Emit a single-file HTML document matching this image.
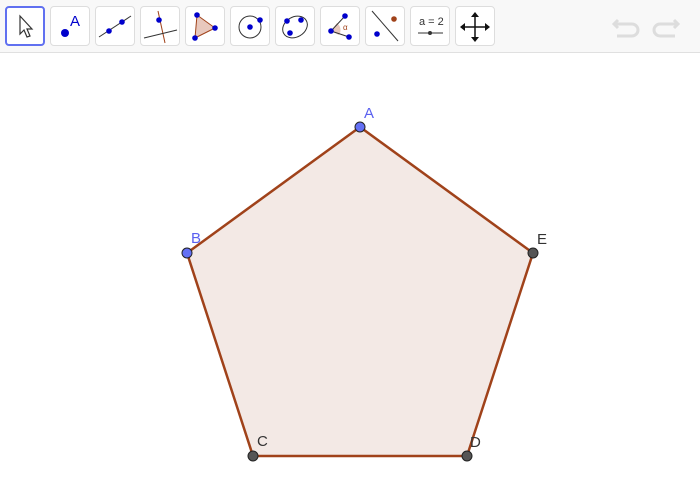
<!DOCTYPE html>
<html><head><style>
body{margin:0;width:700px;height:500px;overflow:hidden;background:#fff;font-family:"Liberation Sans",sans-serif}
#tb{position:absolute;left:0;top:0;width:700px;height:52px;background:#f8f8f8;border-bottom:1px solid #e0e0e0}
.b{position:absolute;top:6px;width:38px;height:38px;background:#fff;border:1px solid #ddd;border-radius:4px}
.b svg{position:absolute;left:0;top:0}
</style></head><body>
<div id="tb">
<div class="b" style="left:5px;border:2px solid #6070f0;width:36px;height:36px"><svg width="36" height="36"><path d="M13 8 L13 26 L17 22 L20 29 L23 28 L20 21 L25 21 Z" fill="#fff" stroke="#333" stroke-width="1.2"/></svg></div>
<div class="b" style="left:50px"><svg width="38" height="38"><circle cx="14" cy="26" r="4" fill="#00c"/><text x="19" y="19" font-size="15" fill="#00c" font-family="Liberation Sans">A</text></svg></div>
<div class="b" style="left:95px"><svg width="38" height="38"><line x1="3" y1="30" x2="35" y2="9" stroke="#333"/><circle cx="13" cy="24" r="2.8" fill="#00c"/><circle cx="26" cy="15" r="2.8" fill="#00c"/></svg></div>
<div class="b" style="left:140px"><svg width="38" height="38"><line x1="17" y1="4" x2="24" y2="36" stroke="#a0421a"/><line x1="3" y1="31" x2="36" y2="23" stroke="#333"/><circle cx="18" cy="13" r="2.8" fill="#00c"/></svg></div>
<div class="b" style="left:185px"><svg width="38" height="38"><polygon points="11,8 29,21 9,31" fill="#e8c8bd" stroke="#a0421a"/><circle cx="11" cy="8" r="2.8" fill="#00c"/><circle cx="29" cy="21" r="2.8" fill="#00c"/><circle cx="9" cy="31" r="2.8" fill="#00c"/></svg></div>
<div class="b" style="left:230px"><svg width="38" height="38"><circle cx="19" cy="20" r="11" fill="none" stroke="#333"/><circle cx="19" cy="20" r="2.8" fill="#00c"/><circle cx="29" cy="13" r="2.8" fill="#00c"/></svg></div>
<div class="b" style="left:275px"><svg width="38" height="38"><ellipse cx="19" cy="20" rx="13" ry="10" transform="rotate(-30 19 20)" fill="none" stroke="#333"/><circle cx="11" cy="14" r="2.8" fill="#00c"/><circle cx="25" cy="13" r="2.8" fill="#00c"/><circle cx="14" cy="26" r="2.8" fill="#00c"/></svg></div>
<div class="b" style="left:320px"><svg width="38" height="38"><path d="M10 24 L18 28 A9 9 0 0 0 16 16 Z" fill="#e8c8bd"/><polyline points="24,9 10,24 28,30" fill="none" stroke="#333"/><circle cx="24" cy="9" r="2.8" fill="#00c"/><circle cx="10" cy="24" r="2.8" fill="#00c"/><circle cx="28" cy="30" r="2.8" fill="#00c"/><text x="22" y="23" font-size="8" fill="#a0421a">α</text></svg></div>
<div class="b" style="left:365px"><svg width="38" height="38"><line x1="6" y1="4" x2="32" y2="34" stroke="#333"/><circle cx="28" cy="12" r="2.8" fill="#a0421a"/><circle cx="11" cy="27" r="2.8" fill="#00c"/></svg></div>
<div class="b" style="left:410px"><svg width="38" height="38"><text x="8" y="18" font-size="11" fill="#333">a = 2</text><line x1="7" y1="26" x2="32" y2="26" stroke="#333"/><circle cx="19" cy="26" r="2" fill="#333"/></svg></div>
<div class="b" style="left:455px"><svg width="38" height="38"><path d="M19 8 V32 M7 20 H31" stroke="#111" stroke-width="1.5"/><path d="M19 5 L15 10 H23 Z M19 35 L15 30 H23 Z M4 20 L9 16 V24 Z M34 20 L29 16 V24 Z" fill="#111"/></svg></div>
<svg style="position:absolute;left:612px;top:12px" width="70" height="28"><path d="M6 8 L2 12 L6 16 M2 12 H20 A6 6 0 0 1 20 24 H5" fill="none" stroke="#ddd" stroke-width="3"/><path d="M62 8 L66 12 L62 16 M66 12 H48 A6 6 0 0 0 48 24 H63" fill="none" stroke="#ddd" stroke-width="3"/></svg>
</div>
<svg style="position:absolute;left:0;top:0" width="700" height="500">
<polygon points="360,127 533,253 467,456 253,456 187,253" fill="#f3e9e5" stroke="#a0421a" stroke-width="2.5" stroke-linejoin="round"/>
<g stroke="#222" stroke-width="1">
<circle cx="360" cy="127" r="5" fill="#6470f4"/>
<circle cx="187" cy="253" r="5" fill="#6470f4"/>
<circle cx="253" cy="456" r="5" fill="#555"/>
<circle cx="467" cy="456" r="5" fill="#555"/>
<circle cx="533" cy="253" r="5" fill="#555"/>
</g>
<g font-family="Liberation Sans" font-size="15">
<text x="364" y="118" fill="#5a60f0">A</text>
<text x="191" y="243" fill="#5a60f0">B</text>
<text x="257" y="446" fill="#333">C</text>
<text x="470" y="447" fill="#333">D</text>
<text x="537" y="244" fill="#333">E</text>
</g>
</svg>
</body></html>
